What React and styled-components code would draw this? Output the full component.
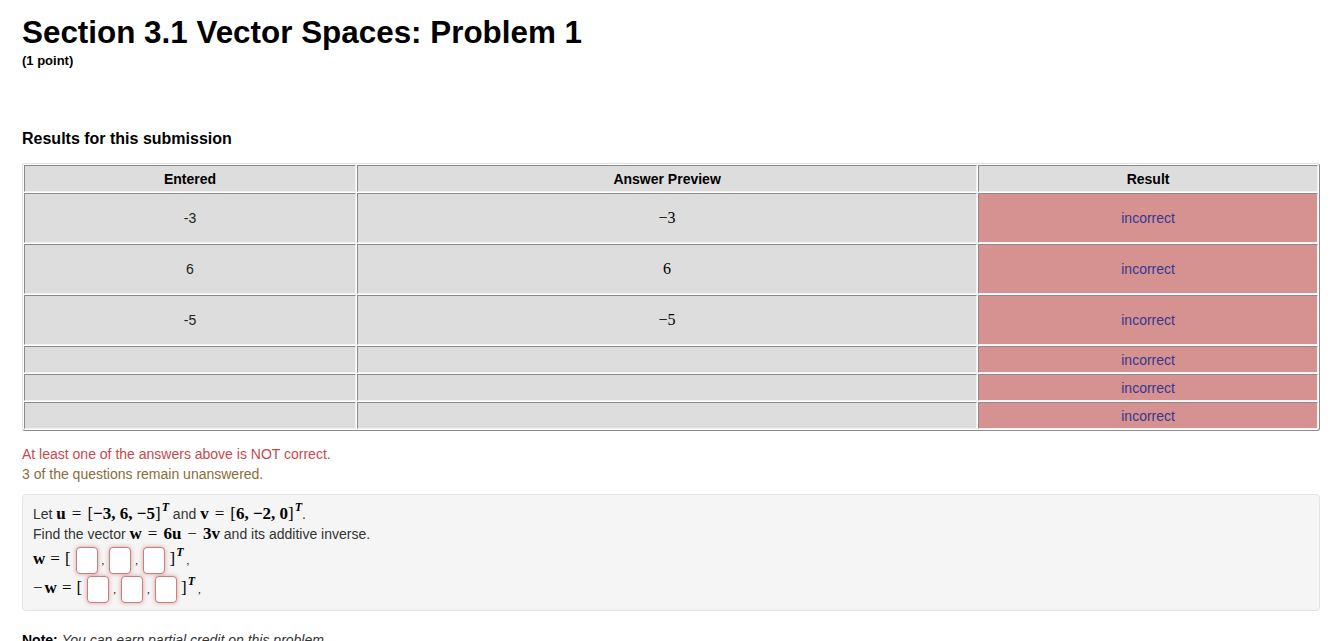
import React from "react";
import styled, { createGlobalStyle } from "styled-components";

const Global = createGlobalStyle`
  html, body { margin: 0; padding: 0; background: #fff; }
  body { font-family: "Liberation Sans", Arial, sans-serif; color: #333; font-size: 14px; }
`;

const Page = styled.div`
  padding: 0 24px 40px 22px;
`;

const Title = styled.h1`
  margin: 13px 0 0;
  font-size: 31.4px;
  line-height: 40px;
  font-weight: 700;
  color: #000;
`;

const Points = styled.div`
  font-size: 13px;
  font-weight: 700;
  color: #000;
  line-height: 16px;
  margin-top: 0;
`;

const SubHeading = styled.h3`
  margin: 60px 0 14px;
  font-size: 16px;
  line-height: 20px;
  font-weight: 700;
  color: #000;
`;

const Table = styled.table`
  width: 100%;
  table-layout: fixed;
  border-collapse: separate;
  border-spacing: 1px;
  border: 1px solid;
  border-color: #e2e2e2 #8c8c8c #8c8c8c #e2e2e2;
  border-radius: 3px;
`;

const Cell = styled.td`
  box-sizing: border-box;
  background: ${(p) => (p.$bad ? "#d69191" : "#dddddd")};
  color: ${(p) => (p.$bad ? "#35388f" : "#222")};
  border: 1px solid;
  border-color: #8a8a8a #f2f2f2 #f2f2f2 #8a8a8a;
  text-align: center;
  vertical-align: middle;
  font-size: 14px;
  height: ${(p) => (p.$tall ? "50px" : "27px")};
  padding: 0 4px;
  line-height: 16px;
`;

const Head = styled(Cell).attrs({ as: "th" })`
  font-weight: 700;
  color: #000;
  font-size: 14px;
  height: 27px;
`;

const Math = styled.span`
  font-family: "Liberation Serif", "Times New Roman", serif;
  font-size: ${(p) => p.$size || "17px"};
  font-weight: ${(p) => (p.$bold ? 700 : 400)};
  color: #000;
  white-space: nowrap;
`;

const Rel = styled.span`
  font-family: "Liberation Serif", "Times New Roman", serif;
  font-size: 17px;
  color: #000;
  margin: 0 ${(p) => p.$gap ?? 6}px;
`;

const Sup = styled.sup`
  font-family: "Liberation Serif", "Times New Roman", serif;
  font-style: italic;
  font-weight: 700;
  font-size: 12px;
  line-height: 0;
  vertical-align: 8px;
  color: #000;
  margin-left: 1px;
`;

const Messages = styled.div`
  margin-top: 13px;
  line-height: 20px;
  font-size: 14px;
`;

const MsgLine = styled.div`
  color: ${(p) => p.$color};
`;

const ProblemBox = styled.div`
  margin-top: 10px;
  background: #f5f5f5;
  border: 1px solid #e3e3e3;
  border-radius: 4px;
  padding: 9px 10px 8px;
  color: #333;
  font-size: 14px;
  line-height: 20px;
`;

const Line = styled.div`
  line-height: ${(p) => (p.$input ? "29px" : "20px")};
  height: ${(p) => (p.$input ? "29px" : "20px")};
  white-space: nowrap;
`;

const AnswerBox = styled.span`
  display: inline-block;
  box-sizing: border-box;
  width: 22px;
  height: 27px;
  vertical-align: middle;
  background: #fff;
  border: 1px solid #c87f7f;
  border-radius: 4px;
  box-shadow: 0 0 4px rgba(200, 80, 80, 0.55);
  margin: 0 1px;
`;

const Comma = styled.span`
  font-family: "Liberation Serif", serif;
  font-size: 11px;
  margin: 0 4px 0 3px;
  color: #000;
`;

const Note = styled.div`
  margin-top: 19px;
  font-size: 14px;
  line-height: 20px;
  color: #000;
  b { font-weight: 700; }
  i { font-style: italic; color: #333; }
`;

const rows = [
  { entered: "-3", preview: "\u22123", tall: true },
  { entered: "6", preview: "6", tall: true },
  { entered: "-5", preview: "\u22125", tall: true },
  { entered: "", preview: "", tall: false },
  { entered: "", preview: "", tall: false },
  { entered: "", preview: "", tall: false },
];

function Vector({ prefix }) {
  return (
    <Line $input>
      {prefix}
      <Rel $gap={5}>=</Rel>
      <Math $size="17px">[</Math>
      <Rel $gap={2} />
      <AnswerBox />
      <Comma>,</Comma>
      <AnswerBox />
      <Comma>,</Comma>
      <AnswerBox />
      <Math $size="17px">{"\u2009]"}</Math>
      <Sup>T</Sup>
      <Comma>,</Comma>
    </Line>
  );
}

export default function App() {
  return (
    <>
      <Global />
      <Page>
        <Title>Section 3.1 Vector Spaces: Problem 1</Title>
        <Points>(1 point)</Points>
        <SubHeading>Results for this submission</SubHeading>
        <Table>
          <colgroup>
            <col style={{ width: "25.7%" }} />
            <col style={{ width: "48%" }} />
            <col style={{ width: "26.3%" }} />
          </colgroup>
          <thead>
            <tr>
              <Head>Entered</Head>
              <Head>Answer Preview</Head>
              <Head>Result</Head>
            </tr>
          </thead>
          <tbody>
            {rows.map((r, i) => (
              <tr key={i}>
                <Cell $tall={r.tall}>{r.entered}</Cell>
                <Cell $tall={r.tall}>
                  <Math $size="16px">{r.preview}</Math>
                </Cell>
                <Cell $tall={r.tall} $bad>
                  incorrect
                </Cell>
              </tr>
            ))}
          </tbody>
        </Table>
        <Messages>
          <MsgLine $color="#c9484b">At least one of the answers above is NOT correct.</MsgLine>
          <MsgLine $color="#8a6d3b">3 of the questions remain unanswered.</MsgLine>
        </Messages>
        <ProblemBox>
          <Line>
            {"Let "}
            <Math $bold>u</Math>
            <Rel>=</Rel>
            <Math>[</Math>
            <Math $bold>{"\u22123, 6, \u22125"}</Math>
            <Math>]</Math>
            <Sup>T</Sup>
            {" and "}
            <Math $bold>v</Math>
            <Rel>=</Rel>
            <Math>[</Math>
            <Math $bold>{"6, \u22122, 0"}</Math>
            <Math>]</Math>
            <Sup>T</Sup>.
          </Line>
          <Line>
            {"Find the vector "}
            <Math $bold>w</Math>
            <Rel>=</Rel>
            <Math $bold>6u</Math>
            <Rel $gap={6}>{"\u2212"}</Rel>
            <Math $bold>3v</Math>
            {" and its additive inverse."}
          </Line>
          <Vector prefix={<Math $bold $size="17px">w</Math>} />
          <Vector
            prefix={
              <>
                <Rel $gap={0}>{"\u2212"}</Rel>
                <Rel $gap={1} />
                <Math $bold $size="17px">w</Math>
              </>
            }
          />
        </ProblemBox>
        <Note>
          <b>Note:</b> <i>You can earn partial credit on this problem.</i>
        </Note>
      </Page>
    </>
  );
}
